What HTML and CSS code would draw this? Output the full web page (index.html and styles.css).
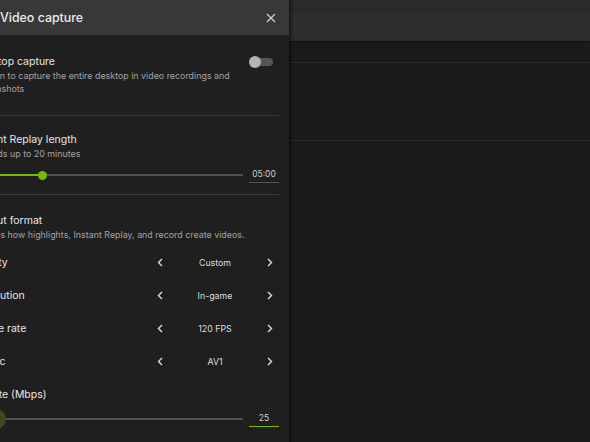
FILE: index.html
```html
<!DOCTYPE html>
<html>
<head>
<meta charset="utf-8">
<link rel="stylesheet" href="styles.css">
</head>
<body>
<div class="app">
  <aside class="drawer">
    <header class="drawer-head">
      <h1 class="drawer-title">Video capture</h1>
      <button class="close" aria-label="Close">
        <svg width="10" height="10" viewBox="0 0 10 10"><path d="M1 1L9 9M9 1L1 9" stroke="#cfcfcf" stroke-width="1.3" fill="none"/></svg>
      </button>
    </header>
    <div class="drawer-body">
      <section class="setting first">
        <div class="head-row">
          <div class="label">Desktop capture</div>
          <div class="toggle"><span class="knob"></span></div>
        </div>
        <p class="desc narrow">Turn on to capture the entire desktop in video recordings and screenshots</p>
      </section>
      <section class="setting second">
        <div class="label">Instant Replay length</div>
        <p class="desc">Records up to 20 minutes</p>
        <div class="slider slider-1">
          <div class="track"><div class="fill" style="width:69px"></div><span class="thumb" style="left:69px"></span></div>
          <div class="value">05:00</div>
        </div>
      </section>
      <section class="setting last">
        <div class="label">Output format</div>
        <p class="desc">Defines how highlights, Instant Replay, and record create videos.</p>
        <div class="selects">
          <div class="select-row">
            <span class="label">Quality</span>
            <span class="chev"><svg width="6" height="9" viewBox="0 0 6 9"><path d="M5 1L1.5 4.5L5 8" stroke="#dcdcdc" stroke-width="1.4" fill="none"/></svg></span>
            <span class="opt">Custom</span>
            <span class="chev"><svg width="6" height="9" viewBox="0 0 6 9"><path d="M1 1L4.5 4.5L1 8" stroke="#dcdcdc" stroke-width="1.4" fill="none"/></svg></span>
          </div>
          <div class="select-row">
            <span class="label">Resolution</span>
            <span class="chev"><svg width="6" height="9" viewBox="0 0 6 9"><path d="M5 1L1.5 4.5L5 8" stroke="#dcdcdc" stroke-width="1.4" fill="none"/></svg></span>
            <span class="opt">In-game</span>
            <span class="chev"><svg width="6" height="9" viewBox="0 0 6 9"><path d="M1 1L4.5 4.5L1 8" stroke="#dcdcdc" stroke-width="1.4" fill="none"/></svg></span>
          </div>
          <div class="select-row">
            <span class="label">Frame rate</span>
            <span class="chev"><svg width="6" height="9" viewBox="0 0 6 9"><path d="M5 1L1.5 4.5L5 8" stroke="#dcdcdc" stroke-width="1.4" fill="none"/></svg></span>
            <span class="opt">120 FPS</span>
            <span class="chev"><svg width="6" height="9" viewBox="0 0 6 9"><path d="M1 1L4.5 4.5L1 8" stroke="#dcdcdc" stroke-width="1.4" fill="none"/></svg></span>
          </div>
          <div class="select-row">
            <span class="label">Codec</span>
            <span class="chev"><svg width="6" height="9" viewBox="0 0 6 9"><path d="M5 1L1.5 4.5L5 8" stroke="#dcdcdc" stroke-width="1.4" fill="none"/></svg></span>
            <span class="opt">AV1</span>
            <span class="chev"><svg width="6" height="9" viewBox="0 0 6 9"><path d="M1 1L4.5 4.5L1 8" stroke="#dcdcdc" stroke-width="1.4" fill="none"/></svg></span>
          </div>
        </div>
        <div class="label bitrate">Bit rate (Mbps)</div>
        <div class="slider slider-2">
          <div class="track"><span class="thumb halo" style="left:23px"></span></div>
          <div class="value active">25</div>
        </div>
      </section>
    </div>
  </aside>
  <main class="main">
    <div class="topbar"><div class="topbar-strip"></div></div>
    <div class="main-row short"></div>
    <div class="main-row tall"></div>
  </main>
</div>
</body>
</html>
```

FILE: styles.css
```css
* { box-sizing: border-box; }
html, body { margin: 0; padding: 0; }
body {
  width: 590px;
  height: 442px;
  overflow: hidden;
  background: #1b1b1b;
  font-family: Inter, "Noto Sans", sans-serif;
  color: #e4e4e4;
}
.app {
  display: flex;
  height: 442px;
}
.drawer {
  flex: none;
  width: 332px;
  margin-left: -43px;
  height: 442px;
  background: #1f1f1f;
  box-shadow: 2px 0 3px rgba(0,0,0,0.55);
  position: relative;
  z-index: 2;
  display: flex;
  flex-direction: column;
}
.drawer-head {
  height: 35px;
  background: #383838;
  display: flex;
  align-items: center;
  justify-content: space-between;
  padding: 0 11px 0 43px;
}
.drawer-title {
  margin: 0;
  font-size: 12.4px;
  font-weight: 500;
  color: #ececec;
}
.close {
  background: none;
  border: 0;
  padding: 0;
  width: 14px;
  height: 14px;
  display: flex;
  align-items: center;
  justify-content: center;
}
.drawer-body {
  padding: 0 10px 0 16px;
}
.setting {
  border-bottom: 1px solid #3a3a3a;
}
.setting.first { padding: 20px 0 20px; }
.setting.second { padding: 17px 0 11px; }
.setting.last { border-bottom: 0; padding-top: 19px; }
.head-row {
  display: flex;
  align-items: center;
  justify-content: space-between;
}
.label {
  font-size: 10.5px;
  line-height: 14px;
  color: #e6e6e6;
  white-space: nowrap;
}
.desc {
  margin: 0;
  font-size: 8.9px;
  line-height: 13px;
  color: #a3a3a3;
}
.desc.narrow {
  padding-right: 40px;
}
.toggle {
  width: 24px;
  height: 12px;
  position: relative;
  margin-right: 6px;
}
.toggle::before {
  content: "";
  position: absolute;
  left: 4px;
  right: 0;
  top: 2px;
  height: 8px;
  border-radius: 4px;
  background: #565656;
}
.knob {
  position: absolute;
  left: 0;
  top: 0;
  width: 12px;
  height: 12px;
  border-radius: 50%;
  background: #b3b3b3;
}
.slider {
  display: flex;
  align-items: center;
  gap: 6px;
  height: 16px;
}
.slider-1 { margin-top: 7px; }
.slider-2 { margin-top: 9px; }
.track {
  flex: 1;
  height: 2px;
  background: #505050;
  position: relative;
}
.fill {
  position: absolute;
  left: 0;
  top: 0;
  bottom: 0;
  background: #76b900;
}
.thumb {
  position: absolute;
  top: 1px;
  width: 9px;
  height: 9px;
  margin: -4.5px 0 0 -4.5px;
  border-radius: 50%;
  background: #76b900;
}
.thumb.halo {
  width: 20px;
  height: 20px;
  margin: -10px 0 0 -10px;
  background: #3a4a1c;
}
.value {
  width: 30px;
  height: 16px;
  font-size: 8.5px;
  line-height: 14px;
  text-align: center;
  color: #cfcfcf;
  border-bottom: 1px solid #555;
}
.value.active {
  border-bottom: 1.5px solid #76b900;
}
.selects {
  margin-top: 5px;
}
.select-row {
  display: grid;
  grid-template-columns: 1fr 18px 92px 18px;
  align-items: center;
  height: 33px;
}
.chev {
  display: flex;
  justify-content: center;
  align-items: center;
}
.opt {
  text-align: center;
  font-size: 8.8px;
  color: #dedede;
}
.bitrate { margin-top: 10px; }
.main {
  flex: 1;
  display: flex;
  flex-direction: column;
}
.topbar {
  height: 41px;
  background: #2d2d2d;
  box-shadow: 0 1px 2px rgba(0,0,0,0.5);
}
.topbar-strip {
  height: 13px;
  background: #2a2a2a;
}
.main-row {
  border-bottom: 1px solid #2a2a2a;
}
.main-row.short { height: 22px; }
.main-row.tall { height: 78px; }
```
